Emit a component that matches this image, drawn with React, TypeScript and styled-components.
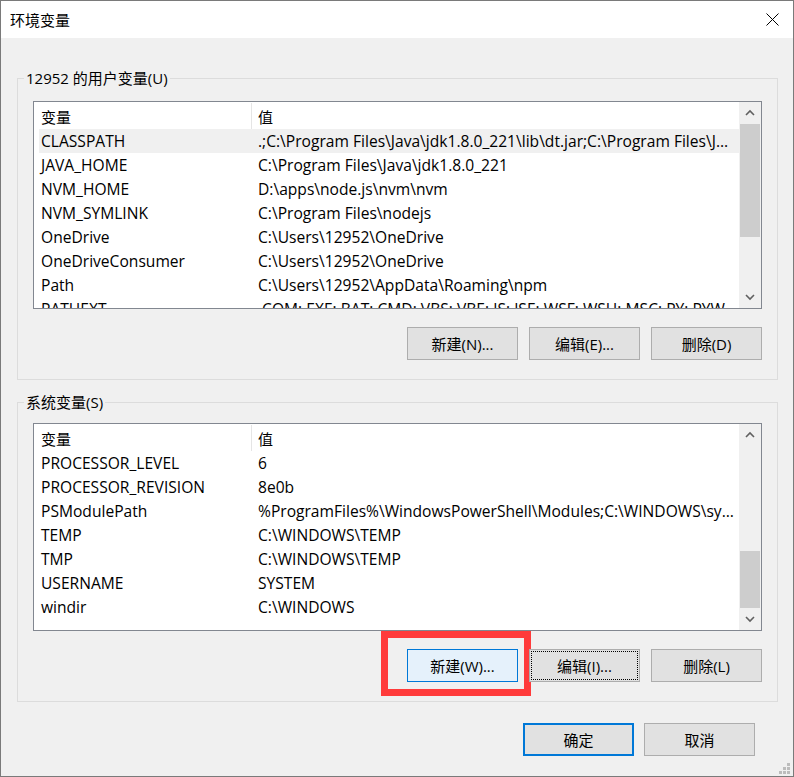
import React from 'react';
import styled, { createGlobalStyle, css } from 'styled-components';

const FONT = `"Open Sans", "Noto Sans CJK SC", sans-serif`;

const GlobalStyle = createGlobalStyle`
  html, body {
    margin: 0;
    padding: 0;
    background: #ffffff;
  }
  * {
    box-sizing: border-box;
  }
`;

type Variable = { name: string; value: string };

const userVars: Variable[] = [
  { name: 'CLASSPATH', value: '.;C:\\Program Files\\Java\\jdk1.8.0_221\\lib\\dt.jar;C:\\Program Files\\Java\\jdk1.8.0_221\\lib\\tools.jar' },
  { name: 'JAVA_HOME', value: 'C:\\Program Files\\Java\\jdk1.8.0_221' },
  { name: 'NVM_HOME', value: 'D:\\apps\\node.js\\nvm\\nvm' },
  { name: 'NVM_SYMLINK', value: 'C:\\Program Files\\nodejs' },
  { name: 'OneDrive', value: 'C:\\Users\\12952\\OneDrive' },
  { name: 'OneDriveConsumer', value: 'C:\\Users\\12952\\OneDrive' },
  { name: 'Path', value: 'C:\\Users\\12952\\AppData\\Roaming\\npm' },
  { name: 'PATHEXT', value: '.COM;.EXE;.BAT;.CMD;.VBS;.VBE;.JS;.JSE;.WSF;.WSH;.MSC;.PY;.PYW' },
];

const systemVars: Variable[] = [
  { name: 'PROCESSOR_LEVEL', value: '6' },
  { name: 'PROCESSOR_REVISION', value: '8e0b' },
  { name: 'PSModulePath', value: '%ProgramFiles%\\WindowsPowerShell\\Modules;C:\\WINDOWS\\system32\\WindowsPowerShell\\v1.0\\Modules' },
  { name: 'TEMP', value: 'C:\\WINDOWS\\TEMP' },
  { name: 'TMP', value: 'C:\\WINDOWS\\TEMP' },
  { name: 'USERNAME', value: 'SYSTEM' },
  { name: 'windir', value: 'C:\\WINDOWS' },
];

const Window = styled.div`
  position: relative;
  width: 794px;
  height: 777px;
  border: 1px solid #7a7a7a;
  background: #f0f0f0;
  display: flex;
  flex-direction: column;
  font-family: ${FONT};
  font-size: 15px;
  color: #000;
`;

const TitleBar = styled.div`
  height: 37px;
  flex: none;
  background: #ffffff;
  display: flex;
  align-items: center;
  justify-content: space-between;
  padding-left: 9px;
`;

const Title = styled.span`
  font-size: 15px;
  line-height: 20px;
`;

const CloseButton = styled.div`
  width: 42px;
  height: 37px;
  display: flex;
  align-items: center;
  justify-content: center;
`;

const Body = styled.div`
  flex: 1;
  display: flex;
  flex-direction: column;
  padding: 30px 15px 0 16px;
`;

const Group = styled.fieldset<{ $gap?: number }>`
  margin: ${p => p.$gap ?? 0}px 0 0 0;
  padding: 0;
  min-inline-size: 0;
  border: 1px solid #dcdcdc;
`;

const Legend = styled.legend`
  margin-left: 6px;
  padding: 0 2px;
  font-size: 15px;
  line-height: 20px;
`;

const GroupContent = styled.div<{ $top: number; $bottom: number }>`
  padding: ${p => p.$top}px 15px ${p => p.$bottom}px 15px;
`;

const ListBox = styled.div`
  height: 208px;
  border: 1px solid #828790;
  background: #ffffff;
  display: flex;
  overflow: hidden;
`;

const ListView = styled.div`
  flex: 1;
  min-width: 0;
  overflow: hidden;
`;

const HeaderRow = styled.div`
  display: grid;
  grid-template-columns: 213px 1fr;
  align-items: start;
  height: 27px;
  margin-left: 5px;
`;

const HeaderCell = styled.div<{ $first?: boolean }>`
  height: 26px;
  margin-top: 1px;
  padding: 2px 0 0 ${p => (p.$first ? 2 : 6)}px;
  line-height: 25px;
  ${p =>
    p.$first &&
    css`
      border-right: 1px solid #e5e5e5;
    `}
`;

const Row = styled.div<{ $selected?: boolean }>`
  display: grid;
  grid-template-columns: 219px 1fr;
  height: 24px;
  line-height: 25px;
  font-size: 15.6px;
  margin-left: 5px;
  background: ${p => (p.$selected ? '#f0f0f0' : 'transparent')};
`;

const NameCell = styled.div`
  padding-left: 2px;
  white-space: nowrap;
  overflow: hidden;
`;

const ValueCell = styled.div`
  padding-right: 4px;
  white-space: nowrap;
  overflow: hidden;
  text-overflow: ellipsis;
`;

const ScrollBar = styled.div`
  width: 22px;
  flex: none;
  padding: 0 1px;
  background: #f0f0f0;
  display: flex;
  flex-direction: column;
`;

const ScrollArrow = styled.div`
  height: 21px;
  flex: none;
  display: flex;
  align-items: center;
  justify-content: center;
`;

const ScrollTrack = styled.div`
  flex: 1;
`;

const Thumb = styled.div<{ $offset: number; $size: number }>`
  margin-top: ${p => p.$offset}px;
  height: ${p => p.$size}px;
  background: #cdcdcd;
`;

const ButtonRow = styled.div`
  display: flex;
  justify-content: flex-end;
  gap: 11px;
  margin-top: 18px;
`;

const FooterRow = styled.div`
  display: flex;
  justify-content: flex-end;
  gap: 10px;
  margin: 21px 23px 0 0;
`;

type Look = 'normal' | 'hover' | 'focus' | 'default';

const Button = styled.button<{ $look?: Look }>`
  position: relative;
  width: 111px;
  height: 33px;
  padding: 0;
  border: 1px solid #adadad;
  background: #e1e1e1;
  font-family: ${FONT};
  font-size: 15px;
  line-height: 20px;
  color: #000;
  ${p =>
    p.$look === 'hover' &&
    css`
      background: #e5f1fb;
      border-color: #0078d7;
    `}
  ${p =>
    p.$look === 'default' &&
    css`
      border: 2px solid #0078d7;
    `}
  ${p =>
    p.$look === 'focus' &&
    css`
      &::after {
        content: '';
        position: absolute;
        inset: 1px;
        border: 1px dotted #000;
      }
    `}
`;

const Marked = styled.div`
  position: relative;
  display: flex;
`;

const Marker = styled.div`
  position: absolute;
  top: -18px;
  left: -26px;
  right: -13px;
  bottom: -14px;
  border: 7px solid #ff3b3b;
  pointer-events: none;
`;

const Grip = styled.svg`
  position: absolute;
  right: 3px;
  bottom: 2px;
`;

const Chevron = ({ up }: { up?: boolean }) => (
  <svg width="10" height="7" viewBox="0 0 10 7">
    <polyline
      points={up ? '1,6 5,2 9,6' : '1,1 5,5 9,1'}
      fill="none"
      stroke="#606060"
      strokeWidth="1.6"
    />
  </svg>
);

type ListProps = {
  items: Variable[];
  selected?: number;
  thumbOffset: number;
  thumbSize: number;
};

const VariableList = ({ items, selected, thumbOffset, thumbSize }: ListProps) => (
  <ListBox>
    <ListView>
      <HeaderRow>
        <HeaderCell $first>变量</HeaderCell>
        <HeaderCell>值</HeaderCell>
      </HeaderRow>
      {items.map((v, i) => (
        <Row key={v.name} $selected={i === selected}>
          <NameCell>{v.name}</NameCell>
          <ValueCell>{v.value}</ValueCell>
        </Row>
      ))}
    </ListView>
    <ScrollBar>
      <ScrollArrow>
        <Chevron up />
      </ScrollArrow>
      <ScrollTrack>
        <Thumb $offset={thumbOffset} $size={thumbSize} />
      </ScrollTrack>
      <ScrollArrow>
        <Chevron />
      </ScrollArrow>
    </ScrollBar>
  </ListBox>
);

const App = () => {
  return (
    <>
      <GlobalStyle />
      <Window>
        <TitleBar>
          <Title>环境变量</Title>
          <CloseButton>
            <svg width="13" height="13" viewBox="0 0 13 13">
              <path d="M0.5 0.5 L12.5 12.5 M12.5 0.5 L0.5 12.5" stroke="#000" strokeWidth="1" />
            </svg>
          </CloseButton>
        </TitleBar>
        <Body>
          <Group>
            <Legend>12952 的用户变量(U)</Legend>
            <GroupContent $top={13} $bottom={19}>
              <VariableList items={userVars} selected={0} thumbOffset={1} thumbSize={113} />
              <ButtonRow>
                <Button>新建(N)...</Button>
                <Button>编辑(E)...</Button>
                <Button>删除(D)</Button>
              </ButtonRow>
            </GroupContent>
          </Group>
          <Group $gap={12}>
            <Legend>系统变量(S)</Legend>
            <GroupContent $top={11} $bottom={19}>
              <VariableList items={systemVars} thumbOffset={106} thumbSize={57} />
              <ButtonRow>
                <Marked>
                  <Button $look="hover">新建(W)...</Button>
                  <Marker />
                </Marked>
                <Button $look="focus">编辑(I)...</Button>
                <Button>删除(L)</Button>
              </ButtonRow>
            </GroupContent>
          </Group>
          <FooterRow>
            <Button $look="default">确定</Button>
            <Button>取消</Button>
          </FooterRow>
        </Body>
        <Grip width="11" height="11" viewBox="0 0 11 11">
          <g fill="#bcbcbc">
            <rect x="8" y="0" width="3" height="3" />
            <rect x="4" y="4" width="3" height="3" />
            <rect x="8" y="4" width="3" height="3" />
            <rect x="0" y="8" width="3" height="3" />
            <rect x="4" y="8" width="3" height="3" />
            <rect x="8" y="8" width="3" height="3" />
          </g>
        </Grip>
      </Window>
    </>
  );
};

export default App;
